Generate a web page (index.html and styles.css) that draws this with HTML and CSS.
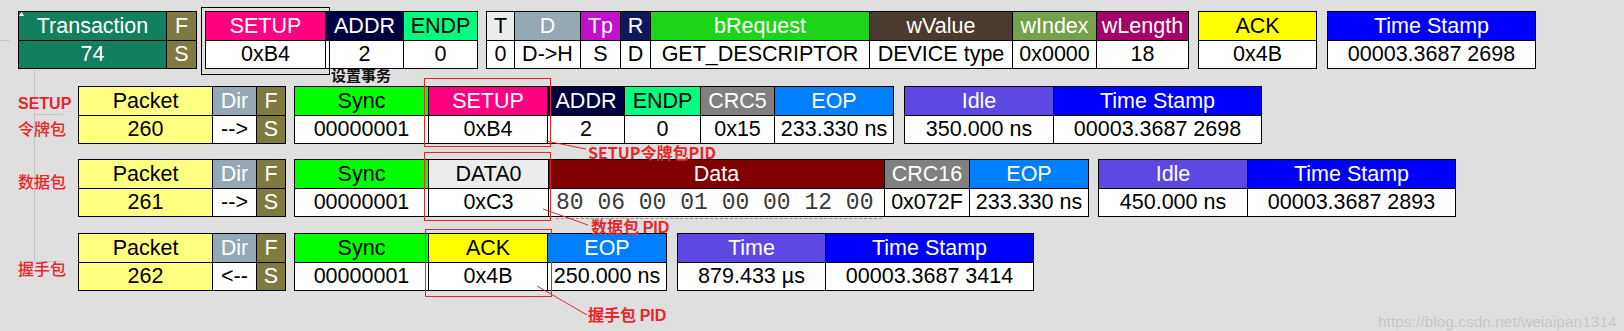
FILE: index.html
```html
<!DOCTYPE html>
<html lang="zh-CN">
<head>
<meta charset="utf-8">
<title>USB Transaction</title>
<link rel="stylesheet" href="styles.css">
</head>
<body>
<div class="page">
  <!-- Transaction row -->
  <div class="row row0">
    <div class="grp">
      <div class="col w147"><div class="h teal">Transaction</div><div class="v teal">74</div></div>
      <div class="col w30"><div class="h olive">F</div><div class="v olive">S</div></div>
    </div>
    <div class="grp">
      <div class="col w119"><div class="h pink">SETUP</div><div class="v">0xB4</div></div>
      <div class="col w78"><div class="h navy">ADDR</div><div class="v">2</div></div>
      <div class="col w74"><div class="h spring">ENDP</div><div class="v">0</div></div>
    </div>
    <div class="grp">
      <div class="col w27"><div class="h lgrey">T</div><div class="v">0</div></div>
      <div class="col w66"><div class="h slate">D</div><div class="v">D-&gt;H</div></div>
      <div class="col w40"><div class="h purple">Tp</div><div class="v">S</div></div>
      <div class="col w30"><div class="h dnavy">R</div><div class="v">D</div></div>
      <div class="col w219"><div class="h green">bRequest</div><div class="v">GET_DESCRIPTOR</div></div>
      <div class="col w143"><div class="h brown">wValue</div><div class="v">DEVICE type</div></div>
      <div class="col w84"><div class="h olivegreen">wIndex</div><div class="v">0x0000</div></div>
      <div class="col w92"><div class="h magenta">wLength</div><div class="v">18</div></div>
    </div>
    <div class="grp ml1">
      <div class="col w117"><div class="h yellow">ACK</div><div class="v">0x4B</div></div>
    </div>
    <div class="grp ml2">
      <div class="col w207"><div class="h blue">Time Stamp</div><div class="v">00003.3687 2698</div></div>
    </div>
  </div>

  <!-- SETUP token packet -->
  <div class="row prow r1">
    <div class="grp">
      <div class="col w133"><div class="h pale">Packet</div><div class="v pale">260</div></div>
      <div class="col w44"><div class="h slate">Dir</div><div class="v">--&gt;</div></div>
      <div class="col w29"><div class="h olive">F</div><div class="v olive">S</div></div>
    </div>
    <div class="grp">
      <div class="col w133"><div class="h lime">Sync</div><div class="v">00000001</div></div>
      <div class="col w119"><div class="h pink">SETUP</div><div class="v">0xB4</div></div>
      <div class="col w77"><div class="h navy">ADDR</div><div class="v">2</div></div>
      <div class="col w76"><div class="h spring">ENDP</div><div class="v">0</div></div>
      <div class="col w74"><div class="h grey">CRC5</div><div class="v">0x15</div></div>
      <div class="col w119"><div class="h azure">EOP</div><div class="v">233.330 ns</div></div>
    </div>
    <div class="grp ml2">
      <div class="col w148"><div class="h violet">Idle</div><div class="v">350.000 ns</div></div>
      <div class="col w208"><div class="h blue">Time Stamp</div><div class="v">00003.3687 2698</div></div>
    </div>
  </div>

  <!-- DATA0 packet -->
  <div class="row prow r2">
    <div class="grp">
      <div class="col w133"><div class="h pale">Packet</div><div class="v pale">261</div></div>
      <div class="col w44"><div class="h slate">Dir</div><div class="v">--&gt;</div></div>
      <div class="col w29"><div class="h olive">F</div><div class="v olive">S</div></div>
    </div>
    <div class="grp">
      <div class="col w133"><div class="h lime">Sync</div><div class="v">00000001</div></div>
      <div class="col w120"><div class="h lgrey">DATA0</div><div class="v">0xC3</div></div>
      <div class="col w336"><div class="h maroon">Data</div><div class="v data"><span class="bytes">80 06 00 01 00 00 12 00</span></div></div>
      <div class="col w85"><div class="h grey">CRC16</div><div class="v">0x072F</div></div>
      <div class="col w119"><div class="h azure">EOP</div><div class="v">233.330 ns</div></div>
    </div>
    <div class="grp ml1">
      <div class="col w148"><div class="h violet">Idle</div><div class="v">450.000 ns</div></div>
      <div class="col w208"><div class="h blue">Time Stamp</div><div class="v">00003.3687 2893</div></div>
    </div>
  </div>

  <!-- ACK handshake packet -->
  <div class="row prow r3">
    <div class="grp">
      <div class="col w133"><div class="h pale">Packet</div><div class="v pale">262</div></div>
      <div class="col w44"><div class="h slate">Dir</div><div class="v">&lt;--</div></div>
      <div class="col w29"><div class="h olive">F</div><div class="v olive">S</div></div>
    </div>
    <div class="grp">
      <div class="col w133"><div class="h lime">Sync</div><div class="v">00000001</div></div>
      <div class="col w119"><div class="h yellow">ACK</div><div class="v">0x4B</div></div>
      <div class="col w119"><div class="h azure">EOP</div><div class="v">250.000 ns</div></div>
    </div>
    <div class="grp ml2">
      <div class="col w147"><div class="h violet">Time</div><div class="v">879.433 µs</div></div>
      <div class="col w208"><div class="h blue">Time Stamp</div><div class="v">00003.3687 3414</div></div>
    </div>
  </div>

  <!-- overlay annotations -->
  <svg class="overlay" width="1624" height="331" viewBox="0 0 1624 331">
    <g stroke="#c4c4c4" stroke-width="1">
      <line x1="34.5" y1="70" x2="34.5" y2="262"/>
      <line x1="34.5" y1="114.5" x2="63" y2="114.5"/>
      <line x1="34.5" y1="261.5" x2="63" y2="261.5"/>
      <line x1="0" y1="40.5" x2="10" y2="40.5"/>
    </g>
    <polygon points="19,16 24,16 21.5,12" fill="#fff"/>
    <rect x="201.5" y="7.5" width="128" height="67" fill="none" stroke="#000" stroke-width="1"/>
    <g fill="none" stroke="#e8262a" stroke-width="1">
      <rect x="424.5" y="78.5" width="126" height="68"/>
      <rect x="424.5" y="152.5" width="126" height="68"/>
      <rect x="425.5" y="229.5" width="126" height="67"/>
      <line x1="546" y1="141" x2="586" y2="149"/>
      <line x1="543" y1="209" x2="588" y2="225"/>
      <line x1="537" y1="286" x2="587" y2="315"/>
    </g>
  </svg>
  <div class="note n-setup">SETUP令牌包PID</div>
  <div class="note n-data">数据包 <b>PID</b></div>
  <div class="note n-ack">握手包 <b>PID</b></div>
  <div class="caption">设置事务</div>
  <div class="side s1"><b>SETUP</b></div>
  <div class="side s2">令牌包</div>
  <div class="side s3">数据包</div>
  <div class="side s4">握手包</div>
  <div class="watermark">https://blog.csdn.net/weiaipan1314</div>
</div>
</body>
</html>
```

FILE: styles.css
```css
* { box-sizing: border-box; }

html, body {
  margin: 0;
  padding: 0;
  background: #dfdfdf;
}

.page {
  position: relative;
  width: 1624px;
  height: 331px;
  overflow: hidden;
  font-family: "Liberation Sans", Arial, sans-serif;
  font-size: 21.5px;
  color: #000;
}

.row {
  display: flex;
  gap: 8px;
  height: 58px;
}
.row0 { padding-left: 18px; margin-top: 11px; }
.prow { padding-left: 78px; }
.r1 { margin-top: 17px; }
.r2 { margin-top: 15px; }
.r3 { margin-top: 16px; }

.ml1 { margin-left: 1px; }
.ml2 { margin-left: 2px; }

.grp {
  display: flex;
  border: 1px solid #000;
  height: 58px;
  background: #fff;
}

.col {
  display: flex;
  flex-direction: column;
  flex: none;
}
.col + .col { border-left: 1px solid #000; }

.h, .v {
  display: flex;
  align-items: center;
  justify-content: center;
  line-height: 1;
  white-space: nowrap;
}
.h { height: 28px; color: #fff; padding-top: 1px; }
.v { height: 28px; border-top: 1px solid #000; background: #fff; padding-top: 1px; }

/* widths */
.w27 { width: 27px; }
.w29 { width: 29px; }
.w30 { width: 30px; }
.w40 { width: 40px; }
.w44 { width: 44px; }
.w66 { width: 66px; }
.w74 { width: 74px; }
.w76 { width: 76px; }
.w77 { width: 77px; }
.w78 { width: 78px; }
.w84 { width: 84px; }
.w85 { width: 85px; }
.w92 { width: 92px; }
.w117 { width: 117px; }
.w119 { width: 119px; }
.w120 { width: 120px; }
.w133 { width: 133px; }
.w143 { width: 143px; }
.w147 { width: 147px; }
.w148 { width: 148px; }
.w207 { width: 207px; }
.w208 { width: 208px; }
.w219 { width: 219px; }
.w336 { width: 336px; }

/* colours */
.teal { background: #128060; color: #fff; }
.olive { background: #7f7a40; color: #fff; }
.pink { background: #ff0080; }
.navy { background: #000040; }
.spring { background: #00ff80; color: #000; }
.lgrey { background: #ececec; color: #000; }
.slate { background: #95a8b4; }
.purple { background: #c010cc; }
.dnavy { background: #10185c; }
.green { background: #1ed41a; }
.brown { background: #4a3a30; }
.olivegreen { background: #76a04a; }
.magenta { background: #a50068; }
.yellow { background: #ffff00; color: #000; }
.blue { background: #0000ff; }
.pale { background: #ffff80; color: #000; }
.lime { background: #00ff00; color: #000; }
.grey { background: #808080; }
.azure { background: #0080ff; }
.violet { background: #5e48e4; }
.maroon { background: #800000; }

.data {
  justify-content: flex-start;
  padding-left: 7px;
}
.bytes {
  font-family: "Liberation Mono", "Courier New", monospace;
  font-size: 23px;
  color: #3a3a3a;
  letter-spacing: 0;
  border-bottom: 1px dashed #9a9a9a;
  padding-bottom: 3px;
  margin-top: 4px;
  width: 326px;
}

/* overlays */
.overlay {
  position: absolute;
  left: 0;
  top: 0;
  pointer-events: none;
}

.note, .side, .caption {
  position: absolute;
  font-family: "Noto Sans CJK SC", "Liberation Sans", sans-serif;
  line-height: 1;
  white-space: nowrap;
}
.note {
  color: #e8262a;
  font-size: 16px;
  font-weight: 700;
}
.note b { font-family: "Liberation Sans", sans-serif; font-weight: 700; }
.n-setup { left: 588px; top: 144px; }
.n-data { left: 591px; top: 218px; }
.n-ack { left: 588px; top: 306px; }

.caption {
  left: 331px;
  top: 67px;
  font-size: 15px;
  font-weight: 700;
  color: #111;
}

.side {
  color: #e8262a;
  font-size: 16px;
  font-weight: 500;
  left: 18px;
}
.side b { font-family: "Liberation Sans", sans-serif; font-weight: 700; }
.s1 { top: 94px; }
.s2 { top: 120px; }
.s3 { top: 173px; }
.s4 { top: 260px; }

.watermark {
  position: absolute;
  left: 1378px;
  top: 313px;
  font-size: 15.5px;
  color: #c2c2c2;
  text-shadow: 0 0 1px #f2f2f2;
  white-space: nowrap;
}
```
